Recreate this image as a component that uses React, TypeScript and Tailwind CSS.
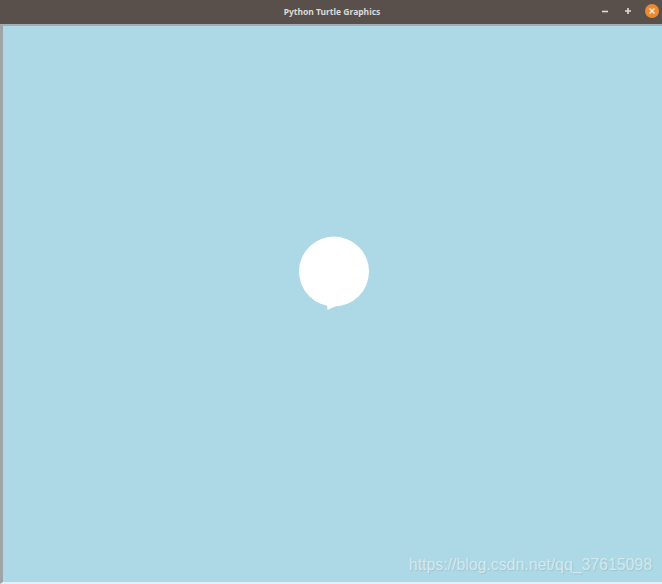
export default function App() {
  return (
    <div className="flex h-[584px] w-[662px] flex-col overflow-hidden bg-[#add8e6] font-['Noto_Sans',sans-serif]">
      {/* title bar */}
      <div className="relative flex h-6 shrink-0 items-center justify-center bg-[#59504b]">
        <span className="pl-[2px] text-[8.5px] font-bold text-[#dcdad7]">Python Turtle Graphics</span>
        <div className="absolute right-[3px] top-[4px] flex items-center">
          <svg width="8" height="8" viewBox="0 0 8 8" className="mr-[15px]">
            <path d="M1 4.5h6" stroke="#dedcda" strokeWidth="1.6" />
          </svg>
          <svg width="8" height="8" viewBox="0 0 8 8" className="mr-[13px]">
            <path d="M1 4h6M4 1v6" stroke="#dedcda" strokeWidth="1.6" />
          </svg>
          <div className="flex h-[14px] w-[14px] items-center justify-center rounded-full bg-[#ec8a30]">
            <svg width="8" height="8" viewBox="0 0 8 8">
              <path d="M1.5 1.5l5 5M6.5 1.5l-5 5" stroke="#f8e8d8" strokeWidth="1.5" />
            </svg>
          </div>
        </div>
      </div>

      {/* canvas */}
      <div className="relative min-h-0 flex-1 border-l-[3px] border-t-2 border-b-2 border-l-[#9ea5a8] border-t-[#a3aeb2] border-b-[#e3f1f6]">
        <svg
          width="76"
          height="78"
          viewBox="0 0 76 78"
          className="absolute left-[295px] top-[209px]"
        >
          <circle cx="36" cy="36.5" r="35" fill="#ffffff" />
          <path d="M29 68L29.500 75L40 70Z" fill="#ffffff" />
        </svg>
        <span className="absolute bottom-[7px] right-[10px] font-['Liberation_Sans',sans-serif] text-[15.85px] leading-5 text-[#d5e8ee] [text-shadow:1px_1px_1px_#9cc5d3]">
          https://blog.csdn.net/qq_37615098
        </span>
      </div>
    </div>
  );
}
